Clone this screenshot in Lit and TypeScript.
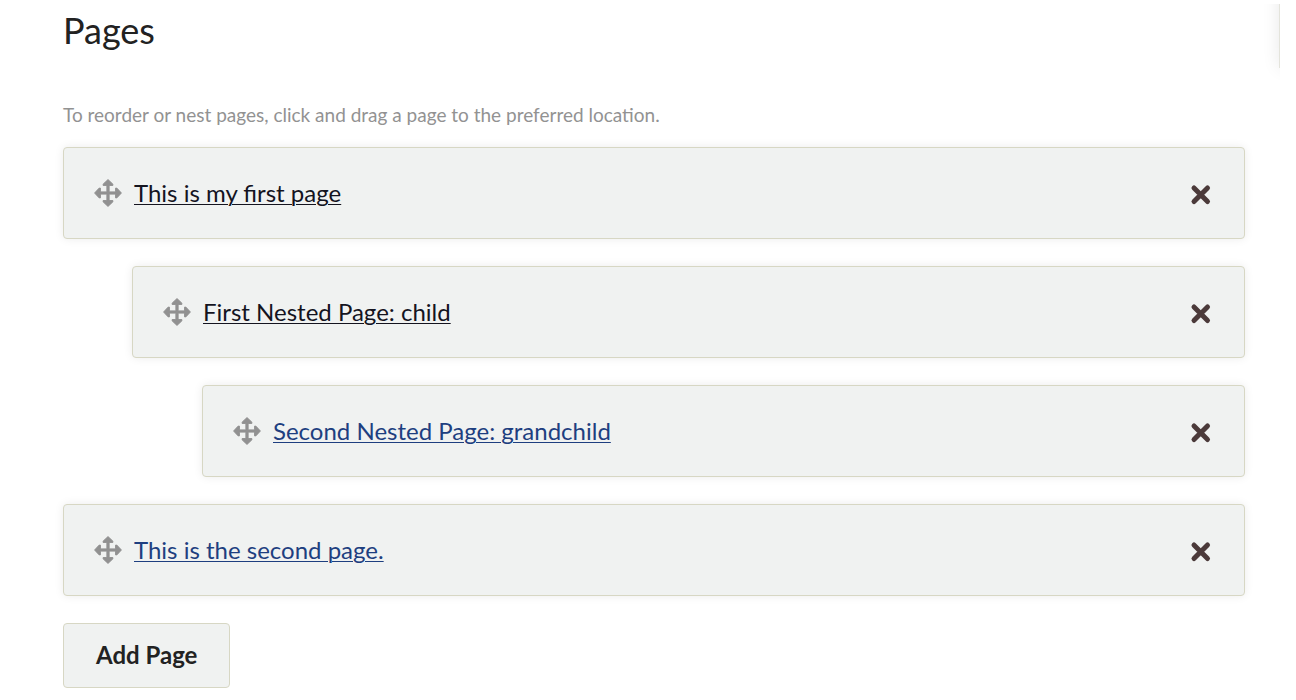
import { LitElement, html, css } from 'lit';
import { customElement, property, state } from 'lit/decorators.js';

interface Page {
  title: string;
  depth: number;
  visited: boolean;
}

@customElement('page-row')
export class PageRow extends LitElement {
  @property() label = '';
  @property({ type: Boolean }) visited = false;

  static styles = css`
    :host {
      display: block;
    }
    .row {
      box-sizing: border-box;
      display: flex;
      align-items: center;
      gap: 12px;
      min-height: 92px;
      padding: 0 32px 0 30px;
      background: #f0f2f1;
      border: 1px solid #d7d7c4;
      border-radius: 4px;
      box-shadow: 0 0 10px rgba(0, 0, 0, 0.08);
    }
    .grip {
      flex: none;
      width: 28px;
      height: 28px;
      fill: #919191;
      stroke: #919191;
      stroke-linejoin: round;
      cursor: move;
    }
    .title {
      flex: 1;
    }
    a {
      color: #1e3f80;
      font-size: 24px;
      line-height: 32px;
      text-decoration: underline;
      text-decoration-thickness: 1px;
      text-underline-offset: 2px;
    }
    a.visited {
      color: #14141f;
    }
    .remove {
      flex: none;
      display: flex;
      padding: 4px 0 0;
      border: 0;
      background: none;
      cursor: pointer;
    }
    .remove svg {
      width: 22px;
      height: 22px;
      fill: none;
      stroke: #4b3a3a;
      stroke-width: 5;
      stroke-linecap: round;
    }
  `;

  render() {
    return html`
      <div class="row">
        <svg class="grip" viewBox="0 0 28 28" aria-hidden="true">
          <path
            d="M14 .6 L18.9 5.2 V6.4 H15.1 V12.9 H21.6 V9.1 H22.8 L27.4 14 L22.8 18.9 H21.6 V15.1 H15.1 V21.6 H18.9 V22.8 L14 27.4 L9.1 22.8 V21.6 H12.9 V15.1 H6.4 V18.9 H5.2 L.6 14 L5.2 9.1 H6.4 V12.9 H12.9 V6.4 H9.1 V5.2 Z"
          />
        </svg>
        <span class="title"><a class=${this.visited ? 'visited' : ''} href="#">${this.label}</a></span>
        <button class="remove" type="button" aria-label="Remove ${this.label}">
          <svg viewBox="0 0 22 22" aria-hidden="true">
            <path d="M4 4 L17.5 17.5 M17.5 4 L4 17.5" />
          </svg>
        </button>
      </div>
    `;
  }
}

@customElement('app-root')
export class AppRoot extends LitElement {
  @state() private pages: Page[] = [
    { title: 'This is my first page', depth: 0, visited: true },
    { title: 'First Nested Page: child', depth: 1, visited: true },
    { title: 'Second Nested Page: grandchild', depth: 2, visited: false },
    { title: 'This is the second page.', depth: 0, visited: false },
  ];

  static styles = css`
    :host {
      display: grid;
      grid-template-columns: minmax(0, 1fr) 35px 16px;
      background: #fff;
      font-family: Lato, 'Liberation Sans', sans-serif;
    }
    main {
      padding: 6px 0 12px 63px;
    }
    /* Left edge of the neighbouring panel, cut off by the page margin */
    .edge {
      height: 78px;
      margin-top: 4px;
      overflow: hidden;
    }
    .panel {
      box-sizing: border-box;
      width: 40px;
      height: 84px;
      margin: -20px 0 0 34px;
      border: 1px solid #e4e4dc;
      background: #f0f2f1;
      box-shadow: 0 0 18px rgba(0, 0, 0, 0.09);
    }
    h1 {
      margin: 0;
      color: #222;
      font-size: 36px;
      font-weight: 400;
      line-height: 48px;
    }
    p {
      margin: 49px 0 20px;
      color: #929292;
      font-size: 19px;
      line-height: 24px;
    }
    ul {
      display: flex;
      flex-direction: column;
      gap: 27px;
      margin: 0;
      padding: 0;
      list-style: none;
    }
    .depth-1 {
      margin-left: 69px;
    }
    .depth-2 {
      margin-left: 139px;
    }
    .add {
      display: block;
      margin-top: 27px;
      padding: 0 32px 2px;
      height: 65px;
      border: 1px solid #d7d7c4;
      border-radius: 4px;
      background: #f0f2f1;
      color: #222;
      font: 700 24px/32px Lato, 'Liberation Sans', sans-serif;
      cursor: pointer;
    }
  `;

  render() {
    return html`
      <main>
        <h1>Pages</h1>
        <p>To reorder or nest pages, click and drag a page to the preferred location.</p>
        <ul>
          ${this.pages.map(
            (page) => html`<li class="depth-${page.depth}">
              <page-row .label=${page.title} ?visited=${page.visited}></page-row>
            </li>`,
          )}
        </ul>
        <button class="add" type="button">Add Page</button>
      </main>
      <div class="edge"><div class="panel"></div></div>
    `;
  }
}
